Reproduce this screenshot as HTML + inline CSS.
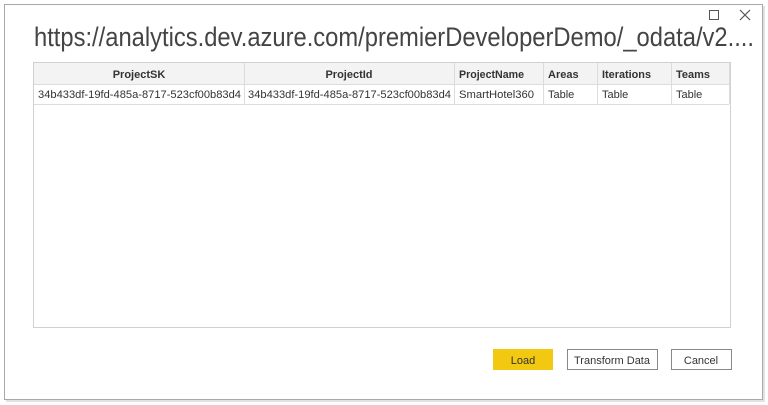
<!DOCTYPE html>
<html><head><style>
html,body{margin:0;padding:0;background:#fff;width:768px;height:405px;overflow:hidden}
</style></head><body>
<svg width="768" height="405" xmlns="http://www.w3.org/2000/svg" font-family="Liberation Sans, sans-serif">
<rect x="0" y="0" width="768" height="405" fill="#fff"/>
<rect x="4.5" y="4.5" width="758" height="395" fill="#fff" stroke="#a8a8a8" stroke-width="1"/>
<rect x="6" y="400" width="758" height="2" fill="#e2e2e2"/>
<rect x="763" y="6" width="2" height="396" fill="#e2e2e2"/>
<rect x="709.5" y="10.5" width="9" height="9" fill="none" stroke="#555" stroke-width="1"/>
<path d="M740 10 L750 20 M750 10 L740 20" stroke="#555" stroke-width="1.2"/>
<text x="34" y="46" font-size="27" fill="#444" textLength="720" lengthAdjust="spacingAndGlyphs">https://analytics.dev.azure.com/premierDeveloperDemo/_odata/v2....</text>
<rect x="33.5" y="62.5" width="697" height="265" fill="#fff" stroke="#d0d0d0"/>
<rect x="34" y="63" width="696" height="21" fill="#f3f3f3"/>
<g stroke="#dcdcdc" stroke-width="1">
<line x1="34" y1="84.5" x2="730" y2="84.5"/>
<line x1="34" y1="104.5" x2="729" y2="104.5"/>
<line x1="244.5" y1="63" x2="244.5" y2="104"/>
<line x1="454.5" y1="63" x2="454.5" y2="104"/>
<line x1="543.5" y1="63" x2="543.5" y2="104"/>
<line x1="597.5" y1="63" x2="597.5" y2="104"/>
<line x1="671.5" y1="63" x2="671.5" y2="104"/>
<line x1="729.5" y1="63" x2="729.5" y2="104"/>
</g>
<g font-size="11" font-weight="bold" fill="#333">
<text x="139" y="78" text-anchor="middle">ProjectSK</text>
<text x="349" y="78" text-anchor="middle">ProjectId</text>
<text x="459" y="78" textLength="65" lengthAdjust="spacingAndGlyphs">ProjectName</text>
<text x="548" y="78">Areas</text>
<text x="602" y="78" textLength="49" lengthAdjust="spacingAndGlyphs">Iterations</text>
<text x="676" y="78">Teams</text>
</g>
<g font-size="11" fill="#333">
<text x="38" y="98" textLength="203" lengthAdjust="spacingAndGlyphs">34b433df-19fd-485a-8717-523cf00b83d4</text>
<text x="248" y="98" textLength="203" lengthAdjust="spacingAndGlyphs">34b433df-19fd-485a-8717-523cf00b83d4</text>
<text x="459" y="98" textLength="75" lengthAdjust="spacingAndGlyphs">SmartHotel360</text>
<text x="548" y="98">Table</text>
<text x="602" y="98">Table</text>
<text x="676" y="98">Table</text>
</g>
<rect x="493" y="349" width="60" height="21" fill="#f2c811"/>
<text x="523" y="364" font-size="11" fill="#333" text-anchor="middle">Load</text>
<rect x="567.5" y="349.5" width="90" height="20" fill="#fff" stroke="#888"/>
<text x="612" y="364" font-size="11" fill="#333" text-anchor="middle">Transform Data</text>
<rect x="671.5" y="349.5" width="60" height="20" fill="#fff" stroke="#888"/>
<text x="701" y="364" font-size="11" fill="#333" text-anchor="middle">Cancel</text>
</svg>
</body></html>
